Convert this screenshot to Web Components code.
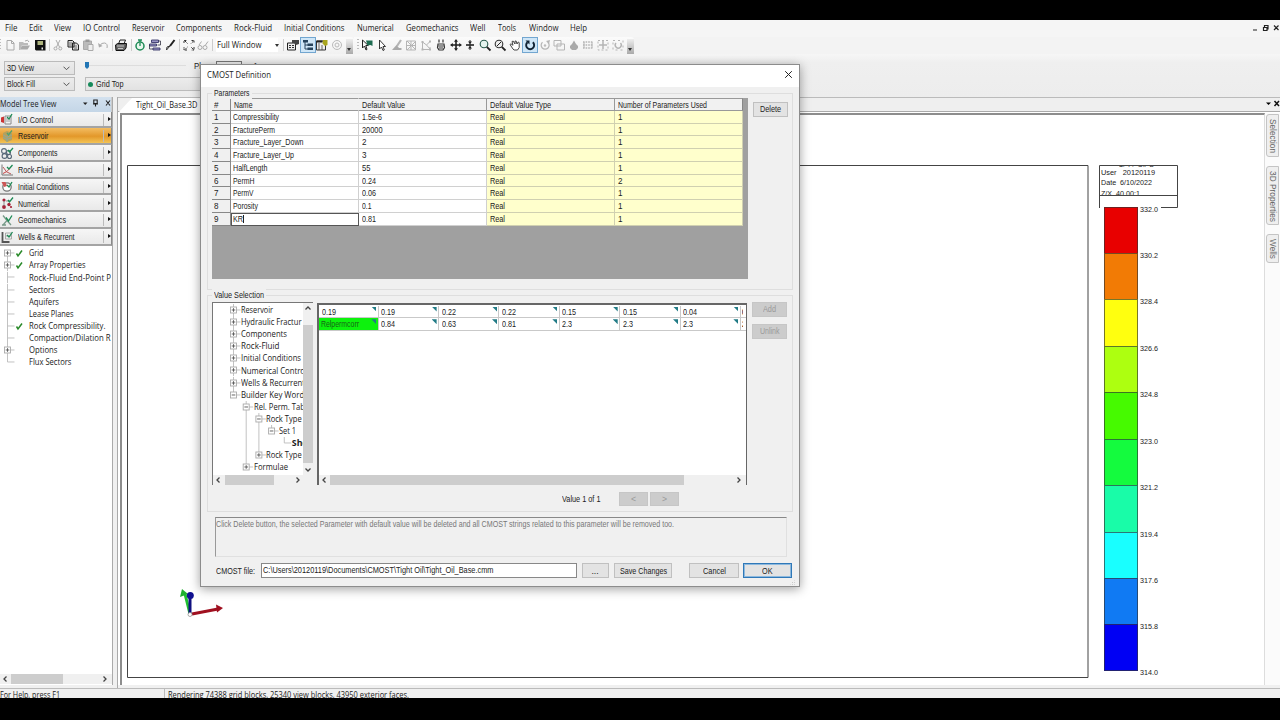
<!DOCTYPE html>
<html lang="en">
<head>
<meta charset="utf-8">
<title>Builder - CMOST Definition</title>
<style>
html,body{margin:0;width:1280px;height:720px;overflow:hidden;background:#000}
body{font:8.8px/12px "Open Sans","Noto Sans",sans-serif;color:#222}
</style>
</head>
<body>
<builder-app></builder-app>
<script>
const BASE = '*{box-sizing:border-box}:host{display:block;min-width:0;box-sizing:border-box}:host([hidden]){display:none}';
function define(tag, css, html, ready) {
  customElements.define(tag, class extends HTMLElement {
    connectedCallback() {
      if (this.shadowRoot) return;
      const root = this.attachShadow({mode: 'open'});
      root.innerHTML = '<style>' + BASE + css + '</style>' + (typeof html === 'function' ? html(this) : html);
      if (ready) ready(this, root);
    }
  });
}
const W = "\"Liberation Sans\",Arial,sans-serif";

/* Text run condensed to the given width */
define('fit-text', ':host{display:inline-block;white-space:pre;flex:none}span{display:inline-block;transform-origin:0 0}', '<span><slot></slot></span>', (el, root) => {
  const w = +el.getAttribute('w');
  if (!w) return;
  const s = root.querySelector('span');
  const vertical = getComputedStyle(el).writingMode !== 'horizontal-tb';
  const r = s.getBoundingClientRect();
  if (vertical) { s.style.transform = `scaleY(${(w / r.height).toFixed(4)})`; el.style.height = w + 'px'; }
  else { s.style.transform = `scaleX(${(w / r.width).toFixed(4)})`; el.style.width = w + 'px'; }
});
const T = (t, w) => `<fit-text w="${w || ''}">${t.replace('&', '&amp;')}</fit-text>`;

/* Icons on a 14x14 grid */
const k = '#222', g = '#b5b5b5', gr = '#1d8a55';
const S = (d, c = k, w = 1.3, x = '') => `<path d="${d}" fill="none" stroke="${c}" stroke-width="${w}" ${x}/>`;
const F = (d, c = k) => `<path d="${d}" fill="${c}"/>`;
const ICONS = {
  new: S('M4 2.5h4.5l2.5 2.5v7H4zM8.500 2.500v3h2.500', '#aaa', 1),
  open: F('M2 4h4l1 1h4v2H5l-2 5H2z', '#bbb') + F('M5 7.500h8l-2.500 4H3z', '#aaa') + S('M8 3q3-2 4 1', '#aaa', 1),
  save: F('M2 2h10.500v10.500h-9.500l-1-1z', '#111') + F('M4.500 3h5.500v4h-5.500z', '#aeb47e') + F('M8.500 9.500h1.500v2h-1.500z', '#eee'),
  cut: S('M5 2l3.500 7M9 2L5.500 9', '#aaa', 1) + '<circle cx="4.500" cy="10.500" r="1.500" fill="none" stroke="#aaa"/><circle cx="9.300" cy="10.500" r="1.500" fill="none" stroke="#aaa"/>',
  copy: '<path d="M2 2.500h4.500l1.500 1.500v5H2zM6.500 5h4l2 2v5h-6z" fill="#ddd" stroke="#222"/>' + S('M3 5h3M3 7h3M8 8h3M8 10h3', '#555', .8),
  paste: '<path d="M2.500 3h8v8.500h-8z" fill="#bbb" stroke="#aaa"/><path d="M7 6.500h5v6H7z" fill="#eee" stroke="#aaa"/>' + F('M4.500 1.500h4v2.500h-4z', '#999'),
  undo: S('M4 8Q5 4.500 8.500 5T11 10', '#aaa', 1) + F('M2 5l1 4.500 3.500-1.500z', '#aaa'),
  print: '<path d="M4.500 6l1.500-4h5.500l-1.500 4z" fill="#eee" stroke="#222"/><path d="M1.500 7l2-1.500h9l-.5 4.500-2 2.500H2z" fill="#666" stroke="#111"/>' + S('M3 8h7M4 10.500h5', '#ddd', .8),
  run: `<circle cx="7" cy="8" r="4" fill="#e9f7ee" stroke="${gr}" stroke-width="1.500"/>` + S('M7 8V5M5 2h4M7 2v2', gr),
  flow: '<path d="M3.500 2h7v2.500h-7zM1.500 6h7v2h-7zM5 10h7v2H5z" fill="#9a95c5" stroke="#38386a" stroke-width=".9"/>' + S('M10.500 3h2v4h-3M1.500 7v4H5', '#334', .8),
  pen: S('M11.500 2L7 8', '#222', 2) + S('M7 8l-3.500 4 .5-3z', '#333', 1),
  expand: S('M2 5V2.500h3M9.500 2.500h2.500V5M12 9v3H9.500M5 12H2V9M3 3l2.500 2.500M11.500 3L9 5.500M3 11.500l2.500-2.500M11.500 11.500L9 9', '#333', 1, 'stroke-dasharray="2 .6"'),
  glasses: '<circle cx="4" cy="9.500" r="2" fill="none" stroke="#aaa"/><circle cx="9" cy="9.500" r="2" fill="none" stroke="#aaa"/>' + S('M3 7l2.500-3.500M9.500 7L12 3.500', '#aaa', 1),
  props: '<path d="M1.500 5h8v7h-8z" fill="#eee" stroke="#222"/>' + F('M6 2h7v4l-3 1-2-2H6z', '#444') + S('M3 7.500h2M3 9.500h2M6 7.500h2M6 9.500h2', '#333', 1),
  tree: F('M2 2h5v2.500H2zM6.500 5.500h5.500V8H6.500zM6.500 9.500h5.500V12H6.500z', '#26435c') + S('M4 4v7h3M4 7h3', '#26435c', 1),
  note: '<path d="M1.500 3h9v9h-9z" fill="#eee" stroke="#333"/>' + F('M1.500 2.500h6v2h-6z') + F('M8 2h4.500v5L10 8 7.500 5.500z', '#a9a51e') + S('M4 5v7M7 7v5', '#444', .8),
  ring: '<circle cx="7" cy="7" r="4.500" fill="none" stroke="#bbb"/><circle cx="7" cy="7" r="2" fill="none" stroke="#bbb"/>',
  pickflag: S('M2.500 2v8l2-2 1.500 4 1-.6L5.800 7.500h2.500z', k, 1) + F('M6 2.500h6.500V8L10.500 7 7.500 7.500z', '#1d6b50'),
  arrow: '<path d="M4.500 2v9l2-2 1.500 3.500 1.300-.6L8 8.500h2.500z" fill="#fff" stroke="#222" stroke-width=".9"/>',
  brush: S('M11 2L7 8', g, 2.200) + F('M6.500 7L2 12h9.500v-2H9z', '#aaa'),
  hatch: S('M2.500 3h9v9h-9zM3 3l9 9M12 3l-9 9M7 3v9M3 7.500h9', g, 1),
  region: S('M3.500 4l4 3 3.500-3.500M3.500 4v7.500h7.500V9M7.500 7l3.500 4', g, 1) + F('M2.500 3h2v2h-2zM10 2.500h2v2h-2zM2.500 10.500h2v2h-2zM10 10.500h2v2h-2z', g),
  legs: S('M5 1.500v3M9 1.500v3M4 6h6l.500 3.500L9 12H5L3.500 9.500zM4.500 8h5M5 10h4', '#333', 1.200),
  move: S('M7 2.500v9M2.500 7h9', k, 1.600) + F('M7 1L9 3.800H5zM7 13l2-2.800H5zM1 7l2.800-2v4zM13 7l-2.800-2v4z'),
  vmove: S('M3 7h8', k, 1.600) + S('M7 2v10', k, 1) + F('M7 6L5 3.500h4zM7 8l2 2.500H5z'),
  zoom: '<circle cx="6" cy="6" r="3.800" fill="#e4f3ee" stroke="#285a4c" stroke-width="1.100"/>' + S('M8.800 8.800L12.500 12.500', k, 1.800),
  zoom2: '<circle cx="6" cy="6" r="3.800" fill="#eee" stroke="#333" stroke-width="1.100"/>' + S('M4 8l4-4', k, 1) + S('M8.800 8.800L12.500 12.500', k, 1.800),
  hand: '<path d="M5 11L2 6.500l1-.7 2 1.500L4 3.500l1.200-.4L7 6V3l1.200.1L9 6l1.200-2 1 .6v5L9.500 12H6z" fill="#fff" stroke="#333" stroke-width=".9"/>',
  rot: S('M4.500 4.200A4 4 0 1 0 9.800 4.200', '#123', 1.900) + F('M2.500 2.500h4v4z', '#123'),
  rotg: S('M4.500 4.200A4 4 0 1 0 9.800 4.200', g, 1.200) + F('M8 3l4-1-1 4z', g) + '<circle cx="7" cy="7.500" r="1.200" fill="#bbb"/>',
  stack: S('M2 2.500h7v5.500H2zM5 6h7.500v6H5z', g, 1),
  drop: F('M7 2.500L9 6l2 2v2l-2 2H5l-2-2V8l2-2z', '#aaa'),
  mesh: S('M2 4h10M2 10h10M2 7h10', g, 1.400, 'stroke-dasharray="1.600 1"') + S('M3 4v6M11 4v6', g, 1),
  movsel: S('M7 3v8M3 7h8', g, 1.500) + S('M2 2.500h10v9.500H2z', g, 1, 'stroke-dasharray="2 2"'),
  rotsel: S('M5 5a3 3 0 1 0 4.500 0', g, 1.400) + S('M2 2.500h10v9.500H2z', g, 1, 'stroke-dasharray="2 3"'),
  io: '<path d="M5 4h6v8H5z" fill="#f3f3f3" stroke="#888"/>' + F('M1 5.500l3-1v6.500l-3-1z', '#c33') + S('M6 7h4M6 9h4', '#888', .8) + S('M7 5l2 2 3-5', gr),
  res: F('M3 4l4-2 5 2v7l-5 2-4-3z', '#b5a05c') + S('M3 6l4 2 5-2M7 8v5M3 8.500l4 2 5-2', '#8ba8a0', .9) + S('M7 4l1.500 2L12 1.500', '#50a070'),
  comp: '<g fill="none" stroke="#567" stroke-width="1.100"><circle cx="4" cy="5" r="2.400"/><circle cx="8.500" cy="6.500" r="2"/><circle cx="4.500" cy="10" r="2.400"/><circle cx="9.500" cy="10.500" r="2"/></g>' + S('M8 4l1.500 2L13 2', gr),
  rock: S('M2 1.500V12h11', '#777', 1) + S('M3 10.500Q7 9.500 11 4', '#c44', 1) + S('M3 4q3 6 8 7', '#b55', 1) + S('M7 4l2 2 3.500-4', gr),
  init: '<circle cx="7" cy="8" r="4.200" fill="#fff" stroke="#777" stroke-width="1.300"/>' + F('M1.500 3h4l1.500 4-3 1z', '#c55') + S('M7 6l2 2 3-5', gr),
  num: '<g fill="#a52238"><circle cx="4" cy="4" r="1.600"/><circle cx="9" cy="8.500" r="1.700"/><circle cx="4" cy="11" r="1.900"/><circle cx="11" cy="11" r="1.100"/></g>' + S('M4 5v5M6 5h4', '#777', .8) + S('M8 4l1.500 2L13 1.500', gr),
  geo: S('M3 2.500l4 5-4 4.500M11 12L7 7.500M2 12h4', '#798', 1.300) + S('M6 4.500L8.500 8 12 2.500', gr),
  wells: S('M2.500 2v10h7M2.500 12', '#555', 1.800) + S('M5.500 3h6v6h-6zM6 6h5', '#999', .8) + S('M7 5l2 2 3.500-5', gr)
};
define('ui-icon', ':host{width:14px;height:14px;flex:none}svg{display:block;width:14px;height:14px}',
  el => `<svg viewBox="0 0 14 14">${ICONS[el.getAttribute('name')] || ''}</svg>`);

/* Menu bar */
const MENU = [[4.7,'File',12.5],[28.7,'Edit',13.5],[54,'View',17],[83,'IO Control',37],[132,'Reservoir',32.5],[176.500,'Components',46],[234.500,'Rock-Fluid',38],[284.500,'Initial Conditions',60.500],[357.300,'Numerical',36.700],[406,'Geomechanics',52.500],[470.500,'Well',15.500],[498.300,'Tools',18],[529,'Window',29.500],[570.300,'Help',17]];
define('menu-bar', ':host{height:17px;display:flex;background:#f5f5f5;line-height:16px;padding-left:4.7px}span{flex:none}b{flex:1}svg{width:28px;height:12px;margin:2px 0 0}',
  () => MENU.map((m, i) => `<span style="width:${((MENU[i+1] || [600])[0] - m[0]).toFixed(1)}px">${T(m[1], m[2])}</span>`).join('') +
  '<b></b><svg viewBox="0 0 28 12"><path d="M1 8h4M11.500 5.500h3.500v3h-3.500zM12.500 5V3.500H16V7h-1M22 3.500l4.500 4.500M26.500 3.500L22 8" fill="none" stroke="#222" stroke-width="1.200"/></svg>');

/* Toolbars */
define('tool-bar', `:host{display:flex;height:17px;padding-bottom:1px;background:linear-gradient(#fbfbfb,#f1f1f1);border-radius:0 3px 3px 0;align-items:center}
 .i{flex:none}.on{background:#cfe6f7;outline:1px solid #72a6d0}.s{width:1px;height:12px;background:#ccc;flex:none}
 .w{width:62px;height:14px;display:flex;background:#fff;line-height:14px;padding-left:1px;flex:none}.w i{margin:6px 0 0 13px}
 i{border:2px solid transparent;border-top:3px solid #333;border-bottom:0;height:3px}
 .o{height:15px;width:7px;background:linear-gradient(#eee,#aaa);margin-top:3px;display:flex;align-items:flex-end;justify-content:center;padding-bottom:3px;flex:none}
 .g{width:2px;height:12px;flex:none;background:repeating-linear-gradient(#bbb 0 1px,transparent 1px 3px)}`,
 el => {
  let x = 0, out = '';
  for (const part of el.getAttribute('items').split(' ')) {
    const [n, c] = part.split('@'), on = n[0] === '*', name = n.replace('*', '');
    const w = name === 'sep' ? 1 : name === 'grip' ? 2 : name === 'more' ? 7 : name === 'combo' ? 62 : 14, gap = +c - w / 2 - x;
    const m = `margin-left:${gap.toFixed(1)}px`; x = +c + w / 2;
    out += name === 'sep' ? `<span class="s" style="${m}"></span>` : name === 'grip' ? `<span class="g" style="${m}"></span>` :
      name === 'more' ? `<span class="o" style="${m}"><i></i></span>` : name === 'combo' ? `<span class="w" style="${m}">${T('Full Window', 44.5)}<i></i></span>` :
      `<ui-icon class="i ${on ? 'on' : ''}" name="${name}" style="${m}"></ui-icon>`;
  }
  return out;
 });

define('combo-box', `:host{height:14px;border:1px solid #bbb;background:linear-gradient(#ececec,#e2e2e2);display:flex;font:8.7px/12px ${W};padding:0 4px 0 2px;align-items:center}b{flex:1}svg{width:7px;height:5px}`,
  '<slot></slot><b></b><svg viewBox="0 0 7 5"><path d="M.500.700l3 3 3-3" fill="none" stroke="#555"/></svg>');

define('view-controls', `:host{height:43px;background:linear-gradient(#f6f6f6,#efefef 20%,#ededed);padding:7px 0 0 4px;display:grid;grid-template-columns:71px 1fr;gap:2px 10px;grid-template-rows:14px 14px;font:8.7px/12px ${W}}
 .s{display:flex;align-items:flex-start}.t{width:101px;height:9px;display:flex;align-items:center;background:linear-gradient(#ddd,#ddd) 0 4px/100% 1px no-repeat}
 .k{width:4px;height:7px;background:#2276b5;clip-path:polygon(0 0,100% 0,100% 70%,50% 100%,0 70%)}
 .p{margin-left:8px;line-height:11px}.n{width:26px;height:12px;border:1px solid #777;margin:0 7px 0 2px;padding-left:3px}
 i{width:5px;height:5px;border-radius:50%;background:#178a5a;margin:0 3px 0 0}.c{width:500px}`,
 `<combo-box>${T('3D View', 27)}</combo-box><div class="s"><div class="t"><div class="k"></div></div><span class="p">${T('Plane', 20)}</span><span class="n">1</span><span>of 1</span></div>
  <combo-box>${T('Block Fill', 28)}</combo-box><combo-box class="c"><i></i>${T('Grid Top', 27.5)}</combo-box>`);

/* Model tree side panel */
const SECT = [['io','I/O Control',35],['res','Reservoir',30.500],['comp','Components',39.500],['rock','Rock-Fluid',34.500],['init','Initial Conditions',51],['num','Numerical',31.500],['geo','Geomechanics',48],['wells','Wells & Recurrent',56.500]];
define('section-button', `:host{height:16.8px;flex:none;display:flex;align-items:center;background:linear-gradient(#f6f6f6,#e9e9e9);border-bottom:2px solid #a4a4a4;border-right:1px solid #888;font:8.7px/14px ${W};padding-top:1.5px}
 :host([active]){background:linear-gradient(#f3bd62,#e3982a 55%,#f4c455)}ui-icon{margin:-1px 4px 0 0}b{flex:1}.a{width:8.500px;height:12px;border-left:1px solid #bbb;padding:3px 0 0 4px}
 .a:after{content:"";display:block;border:2.300px solid transparent;border-left:3px solid #111;border-right:0;height:0;width:0}`,
 el => `<ui-icon name="${el.getAttribute('icon')}"></ui-icon><slot></slot><b></b><span class="a"></span>`);

define('tree-row', `:host{display:flex;height:12.07px;align-items:center;white-space:pre;line-height:12px;overflow:hidden}
 svg{width:15px;height:12.1px;flex:none}.c{width:9px;height:12px;flex:none}`,
 el => {
  const e = el.getAttribute('exp'), lines = (el.getAttribute('lines') || '').split(',').filter(Boolean), lvl = +el.getAttribute('level') || 0, last = el.hasAttribute('last'), first = el.hasAttribute('first');
  const ind = lvl * 12.7, w = ind + 15, cx = ind + 7.5;
  let s = lines.map(l => `<path d="M${l * 12.7 + 7.5} 0v12.1"/>`).join('');
  s += `<path d="M${cx} ${first ? 6 : 0}V${last ? 6 : 12.1}M${cx} 6h7"/>`;
  if (e) s += `<rect x="${cx - 3}" y="3" width="6" height="6" fill="#fff" stroke="#aaa"/><path d="M${cx - 1.8} 6h3.600${e === '+' ? `M${cx} 4.200v3.600` : ''}" stroke="#555"/>`;
  const chk = el.hasAttribute('checkable') ? `<svg class="c" viewBox="0 0 9 12"><path d="${el.hasAttribute('checked') ? 'M1.500 6.500l1.500 2.500L7 3.500' : ''}" fill="none" stroke="#2a8a2a" stroke-width="1.500"/></svg>` : '';
  return `<svg style="width:${w}px" viewBox="0 0 ${w} 12.1" fill="none" stroke="#bbb" stroke-width=".9">${s}</svg>${chk}<slot></slot>`;
 });

define('scroll-bar', `:host{display:flex;background:#f0f0f0;height:10px;align-items:center}:host([vertical]){flex-direction:column;width:10px;height:auto}
 svg{width:10px;height:10px;flex:none}span{flex:none;background:#cdcdcd;width:var(--len);height:10px;margin-left:var(--off,0)}b{flex:1}
 :host([vertical]) span{width:10px;height:var(--len);margin:var(--off,0) 0 0}`,
 el => { const v = el.hasAttribute('vertical'); const a = d => `<svg viewBox="0 0 10 10"><path d="${d}" fill="none" stroke="#444" stroke-width="1.300"/></svg>`;
  return a(v ? 'M2.500 6.500L5 4l2.500 2.500' : 'M6.500 2.500L4 5l2.500 2.500') + '<span></span><b></b>' + a(v ? 'M2.500 3.500L5 6l2.500-2.500' : 'M3.500 2.500L6 5 3.500 7.500'); });

const TREE = [['Grid',14.5,'+',1],['Array Properties',56.500,'+',1],['Rock-Fluid End-Point P',82],['Sectors',25.500],['Aquifers',30],['Lease Planes',44.500],['Rock Compressibility.',76.500,'',1],['Compaction/Dilation R',81.5],['Options',28.500,'+'],['Flux Sectors',42.500]];
define('model-tree', `:host{width:113px;display:flex;flex-direction:column;border-right:1px solid #aaa;background:#fff;flex:none}
 header{height:14.5px;background:linear-gradient(#d3e1ee,#c4d6e7);display:flex;line-height:14px;flex:none;border-right:1px solid #ccc}header b{flex:1}header svg{width:30px;height:12px}
 .t{flex:1;padding-top:1.5px;overflow:hidden}.t tree-row{width:110.500px}
 scroll-bar{margin-bottom:1.500px;--len:52px;--off:1px;padding-right:2px;flex:none}`,
 () => `<header>${T('Model Tree View', 56.500)}<b></b><svg viewBox="0 0 30 12"><path d="M2 5.500h4.500L4.200 8z" fill="#222"/><path d="M12.800 3h3.400v3.500h-3.400zM12 7h5M14.500 7v2.500M25 3.500l4 5M29 3.500l-4 5" fill="none" stroke="#222" stroke-width="1.100"/></svg></header>
 ${SECT.map((s, i) => `<section-button icon="${s[0]}" ${i === 1 ? 'active' : ''}>${T(s[1], s[2])}</section-button>`).join('')}
 <div class="t">${TREE.map((r, i) => `<tree-row checkable ${r[2] ? `exp="${r[2]}"` : ''} ${r[3] ? 'checked' : ''} ${i === 0 ? 'first' : ''} ${i === 9 ? 'last' : ''}><span style="width:4.500px"></span>${T(r[0], r[1])}</tree-row>`).join('')}</div><scroll-bar></scroll-bar>`);

/* 3D view with colour legend */
const COLORS = ['#e80000','#f27b05','#ffff0f','#adff10','#46fa00','#14fb3e','#19fca8','#19ffff','#107af3','#0000f4'];
define('color-legend', `:host{position:absolute;left:982px;top:91.5px;width:80px;font:7.8px/10px ${W}}
 ol{list-style:none;margin:0;padding:0;width:34px}li{height:46.450px;border:1px solid #333a;border-bottom-width:0;position:relative}li:last-child{border-bottom-width:1px}
 span{position:absolute;left:35px;top:-3px}.e{top:auto;bottom:-8px}`,
 () => '<ol>' + COLORS.map((c, i) => `<li style="background:${c}"><span>${T((332 - i * 1.8).toFixed(1), 18)}</span>${i === 9 ? `<span class="e">${T('314.0', 18)}</span>` : ''}</li>`).join('') + '</ol>');
define('info-card', `:host{position:absolute;left:977px;top:49px;width:80px;height:45px;font:7.8px/11px ${W}}svg{position:absolute;left:0;top:0}
 div{height:8.500px;padding-left:1.500px;line-height:9px}.z{height:6px;overflow:hidden;margin-top:3px}.n{height:3px;overflow:hidden;padding-left:20px}.n fit-text{margin-top:-6px}`,
 `<div class="n">${T('Tight_Oil_Base', 46)}</div><div style="margin-top:1px">${T('User   20120119', 54)}</div><div style="margin-top:1px">${T('Date  6/10/2022', 51)}</div><div class="z">${T('Z/X  40.00:1', 39)}</div>
 <svg width="80" height="45"><path d="M.5 44V1.500h78v42H62M.5 31.500h78" fill="none" stroke="#444"/></svg>`);
define('view-port', ':host{position:relative;flex:1;background:#fff;overflow:hidden;border-left:2px solid #8d8d8d;border-top:2px solid #8d8d8d;border-bottom:0;border-right:1px solid #ddd}.g{display:block;width:1142px;height:570px}',
 `<svg class="g" viewBox="0 0 1142 570"><path d="M5.500 50.500h960.500v512H5.500z" fill="none" stroke="#444"/>
 <path d="M68 499L63 479" stroke="#20c030" stroke-width="3"/><path d="M58 482l2-8 6 5z" fill="#20b030"/>
 <path d="M68 499V482" stroke="#101080" stroke-width="3"/><circle cx="68.300" cy="480.500" r="3.500" fill="#101090"/>
 <path d="M70 499l26-5" stroke="#a01020" stroke-width="3"/><path d="M94 489.500l7 3.500-6 4.500z" fill="#a01020"/><circle cx="68" cy="499.500" r="2" fill="#fff" stroke="#888" stroke-width=".7"/></svg>
 <color-legend></color-legend><info-card></info-card>`);
define('side-tabs', `:host{width:15px;background:#fbfbfb;display:flex;flex-direction:column;gap:9px;padding:1px 0 0 1px;flex:none}
 div{border:1px solid #c4c4c4;border-radius:3px 0 0 3px;background:#efefef;writing-mode:vertical-rl;width:13px;color:#666;font:9px/11px ${W};padding-top:4px}`,
 `<div style="height:43px">${T('Selection', 34)}</div><div style="height:59px">${T('3D Properties', 51)}</div><div style="height:29px">${T('Wells', 20)}</div>`);
define('doc-area', `:host{flex:1;display:flex;flex-direction:column;border-left:1px solid #aaa;margin-left:4px;background:#f0f0f0}
 .tabs{height:15px;display:flex;align-items:flex-start;border-bottom:1px solid #aaa;border-top:1px solid #bbb;background:#efefef;flex:none}
 .tab{height:15px;background:#fff;padding:0 6px 0 18px;width:100px;clip-path:polygon(14px 0,100% 0,100% 100%,0 100%);line-height:14px}b{flex:1}
 .m{flex:1;display:flex;background:#fff;min-height:0;padding-top:1px}view-port{margin-left:2px}.tabs svg{width:16px;height:12px;margin-top:0}`,
 `<div class="tabs"><div class="tab">${T('Tight_Oil_Base.3D', 61.500)}</div><b></b><svg viewBox="0 0 16 12"><path d="M2 4.500h5L4.500 7z"/><path d="M10.500 3l4.500 5M15 3l-4.500 5" stroke="#111" stroke-width="1.500"/></svg></div><div class="m"><view-port></view-port><side-tabs></side-tabs></div>`);

/* Dialog pieces */
define('push-button', `:host{display:flex;align-items:center;justify-content:center;background:#e3e3e3;border:1px solid #c0c0c0;flex:none;height:14.500px}
 :host([disabled]){color:#999;background:#ccc;border-color:#c6c6c6}:host([primary]){border-color:#2f78b8;box-shadow:inset 0 0 0 1px #8db9de}`, '<slot></slot>');
define('group-box', `:host{border:1px solid #dedede;position:relative}.l{position:absolute;left:4px;top:-7px;background:#f0f0f0;padding:0 2px;line-height:12px}`, '<span class="l"><slot name="label"></slot></span><slot></slot>');

const PARAMS = [['Compressibility',46,'1.5e-6',20],['FracturePerm',42,'20000',20.500],['Fracture_Layer_Down',70.500,'2',4.5],['Fracture_Layer_Up',61,'3',4.5],['HalfLength',34.500,'55',8.5],['PermH',21.500,'0.24',14],['PermV',20.500,'0.06',14],['Porosity',25,'0.1',9.500],['KR',10,'0.81',14]];
define('param-grid', `:host{background:#a0a0a0;width:536px;height:181px;overflow:hidden}
 .r{display:grid;grid-template-columns:19px 128px 128px 128px 128px;height:12.740px;width:531px;line-height:12px}
 .r>*{border-right:1px solid #d0d0d0;border-bottom:1px solid #d0d0d0;background:#fff;padding-left:3px;overflow:hidden}
 .r>:first-child{background:#f0f0f0;border-color:#888;padding-left:2px}.r>.y{background:#ffffcc;border-color:#d0d0b0}
 .h{height:13px;line-height:12px}.h>*{background:#f1f1f1;border-color:#999;border-top:1px solid #999}.h>:first-child{border-color:#999 #888 #888 #999}.h>:nth-child(2){border-right-color:#f1f1f1}.h>:last-child{border-right-color:#888}
 .r>.ed{border:1px solid #555;padding-left:1px;line-height:11px}.ed i{display:inline-block;width:1px;height:8px;background:#222;vertical-align:-1px}`,
 () => `<div class="r h"><span>${T('#', 4.5)}</span><span>${T('Name', 18.500)}</span><span>${T('Default Value', 43)}</span><span>${T('Default Value Type', 61)}</span><span>${T('Number of Parameters Used', 89)}</span></div>` +
 PARAMS.map((p, i) => `<div class="r"><span>${T(String(i + 1), 4.5)}</span><span class="${i === 8 ? 'ed' : ''}" style="${i < 8 ? 'padding-left:2px' : ''}">${T(p[0], p[1])}${i === 8 ? '<i></i>' : ''}</span><span>${T(p[2], p[3])}</span><span class="y">${T('Real', 15)}</span><span class="y">${T(i === 5 ? '2' : '1', 4.5)}</span></div>`).join(''));

const VT = [[0,'Reservoir',32,'+'],[0,'Hydraulic Fractur',60.500,'+'],[0,'Components',46,'+'],[0,'Rock-Fluid',38.500,'+'],[0,'Initial Conditions',60,'+'],[0,'Numerical Contro',64,'+'],[0,'Wells & Recurrent',64,'+'],[0,'Builder Key Words',67,'-'],[1,'Rel. Perm. Table',57,'-'],[2,'Rock Type 1',42,'-','1'],[3,'Set 1',17,'-','1,2'],[4,'Sheet',0,'','1,2'],[2,'Rock Type 2',42,'+','1'],[1,'Formulae',34,'+','']];
define('value-tree', `:host{width:101px;height:183px;background:#fff;border-left:1.500px solid #777;border-top:1.500px solid #777;display:grid;grid-template-columns:1fr 10px;grid-template-rows:minmax(0,1fr) 10px;font:8.8px/12px "Open Sans","Noto Sans",sans-serif}
 .t{overflow:hidden;padding:1px 0 0 13px;min-height:0;min-width:0}.v{--len:138px;--off:12px}.h{--len:49px;--off:2px;grid-column:1/3;padding-right:10px}tree-row{height:12.100px}`,
 () => `<div class="t">${VT.map((r, i) => `<tree-row level="${r[0]}" lines="${r[4] || ''}" ${r[3] ? `exp="${r[3]}"` : ''} ${[7,10,11,12,13].includes(i) ? 'last' : ''}>${i === 11 ? '<b>Sheet</b>' : T(r[1], r[2])}</tree-row>`).join('')}</div><scroll-bar class="v" vertical></scroll-bar><scroll-bar class="h"></scroll-bar>`);

const VALS = [['0.19','0.19','0.22','0.22','0.15','0.15','0.04','0'],['Relpermcorr','0.84','0.63','0.81','2.3','2.3','2.3','2']];
define('value-grid', `:host{width:429.5px;height:182px;margin-top:1px;background:#fff;border:solid #666;border-width:2px 1px 0 2px;display:flex;flex-direction:column;padding-top:.5px}
 .r{display:grid;grid-template-columns:59.800px repeat(6,60.350px) 1fr;height:12.750px;line-height:13px}.r>*{border-right:1px solid #c9c9c9;border-bottom:1px solid #c9c9c9;padding-left:2.5px;overflow:hidden;display:flex;justify-content:space-between}
 i{width:5px;height:5px;background:#217b86;clip-path:polygon(0 0,100% 0,100% 100%);margin:1px 1.500px 0 0}.r>.x{background:#0df20d;color:#176417;padding-left:1.5px}.s{height:10px;--len:354px;--off:1px;padding-right:2px;flex:none}b{flex:1}.r>.l{padding:0 0 0 1px;border-right:0}.l i{display:none}.l span{width:1.5px;overflow:hidden}`,
 () => VALS.map((r, j) => `<div class="r">${r.map((v, i) => `<span class="${j && !i ? 'x' : ''} ${i === 7 ? 'l' : ''}">${i === 7 ? `<span>${v}</span>` : T(v, v.length > 5 ? 38 : v.length > 3 ? 14 : 10)}<i></i></span>`).join('')}</div>`).join('') + '<b></b><scroll-bar class="s"></scroll-bar>');

define('cmost-dialog', `:host{position:absolute;left:200px;top:64px;width:600px;height:523px;background:#f0f0f0;border:1px solid #8c8c8c;box-shadow:0 2px 10px rgba(0,0,0,.38);font:8.7px/12px ${W};display:flex;flex-direction:column;padding:0 6px 0 6px;color:#222}
 .title{display:flex;height:21.500px;background:#fff;margin:0 -6px;padding:0 6px 0 5.500px;justify-content:space-between;font-family:"Open Sans","Noto Sans",sans-serif;font-size:8.800px;line-height:20px;flex:none}.title svg{width:9px;height:9px;margin-top:5px}
 group-box{flex:none}.p{height:197px;margin-top:6px}.p .in{display:flex;gap:4.500px;padding:4.5px 0 0 4px}
 .p push-button{width:35px;margin-top:4px}.v{height:217px;margin-top:5.500px}.v .in{display:flex;gap:4px;padding:6px 0 0 4px;height:191px}.btn{width:35px;display:flex;flex-direction:column;gap:7.500px;margin-left:1.5px}
 .nav{display:flex;align-items:center;gap:2px;padding:4.5px 0 0 354px;height:19.5px}.nav push-button{width:29px}.nav .n1{margin-left:16.5px}
 .msg{margin:5px 6px 0 8px;height:39.500px;border:1px solid #e0e0e0;border-left:1.500px solid #999;border-top:1.500px solid #888;color:#777;line-height:12px;flex:none}
 .file{display:flex;align-items:center;margin-top:6px;padding-left:9px;height:16px;flex:none}.inp{width:316px;height:15.500px;border:1px solid #888;background:#fff;line-height:13px;padding-left:1px}
 .grip{align-self:flex-end;width:7px;height:7px;background:radial-gradient(circle,#bbb 40%,transparent 45%) 0 0/2.300px 2.300px;clip-path:polygon(100% 0,100% 100%,0 100%);margin:0 -3px 0 0}`,
 `<div class="title">${T('CMOST Definition', 64)}<svg viewBox="0 0 9 9"><path d="M1.200 1.200l6.600 6.600M7.800 1.200L1.200 7.800" stroke="#222"/></svg></div>
 <group-box class="p"><span slot="label">${T('Parameters', 35.500)}</span><div class="in"><param-grid></param-grid><push-button>${T('Delete', 21)}</push-button></div></group-box>
 <group-box class="v"><span slot="label">${T('Value Selection', 50)}</span><div class="in"><value-tree></value-tree><value-grid></value-grid><div class="btn"><push-button disabled>${T('Add', 13)}</push-button><push-button disabled>${T('Unlink', 19.500)}</push-button></div></div>
 <div class="nav">${T('Value 1 of 1', 38.500)}<push-button disabled class="n1">&lt;</push-button><push-button disabled>&gt;</push-button></div></group-box>
 <div class="msg">${T('Click Delete button, the selected Parameter with default value will be deleted and all CMOST strings related to this parameter will be removed too.', 458)}</div>
 <div class="file">${T('CMOST file:', 39)}<div class="inp" style="margin:0 4.500px 0 6px">${T('C:\\Users\\20120119\\Documents\\CMOST\\Tight Oil\\Tight_Oil_Base.cmm', 230.500)}</div><push-button style="width:27px">...</push-button><push-button style="width:58px;margin-left:5.500px">${T('Save Changes', 47)}</push-button><push-button style="width:50px;margin-left:17px">${T('Cancel', 23)}</push-button><push-button primary style="width:49px;margin-left:3.500px">${T('OK', 10.5)}</push-button></div><span class="grip"></span>`);

define('status-bar', ':host{height:10px;overflow:hidden;display:flex;background:#f0f0f0;border-top:1px solid #bbb;line-height:13px;flex:none}span{flex:none}.a{width:164px}.b{border-left:1px solid #bbb;padding-left:2.500px}',
 `<span class="a">${T('For Help, press F1', 60)}</span><span class="b">${T('Rendering 74388 grid blocks, 25340 view blocks, 43950 exterior faces.', 241)}</span>`);

define('builder-app', `:host{position:relative;height:698px;width:1280px;padding-top:20px;display:flex;flex-direction:column;overflow:hidden}
 menu-bar{flex:none}.tools{display:flex;height:17px;background:#f3f3f3;flex:none}.a{width:354px;flex:none}.b{width:280px;flex:none}view-controls{flex:none}.main{flex:1;display:flex;min-height:0;background:#f0f0f0}model-tree{margin-bottom:3px}doc-area{padding-bottom:3px}`,
 `<menu-bar></menu-bar><div class="tools"><tool-bar class="a" items="grip@0 new@10 open@24 save@39.5 sep@49 cut@58 copy@72.5 paste@88 undo@103 sep@112 print@121 sep@131 run@139.5 flow@155 pen@169.5 sep@179 expand@188.5 glasses@203 sep@212 combo@247 sep@283.5 props@292.5 *tree@307.5 note@322 ring@337 more@349"></tool-bar><tool-bar class="b" items="grip@4 pickflag@13 arrow@27.5 brush@42.5 hatch@57 region@72 legs@87 move@101.5 vmove@116 zoom@131 zoom2@146 hand@161 *rot@175.5 rotg@190.5 stack@205 drop@219.5 mesh@234 movsel@249 rotsel@264 more@276"></tool-bar></div>
 <view-controls></view-controls><div class="main"><model-tree></model-tree><doc-area></doc-area></div><status-bar></status-bar><cmost-dialog></cmost-dialog>`);
</script>
</body>
</html>
